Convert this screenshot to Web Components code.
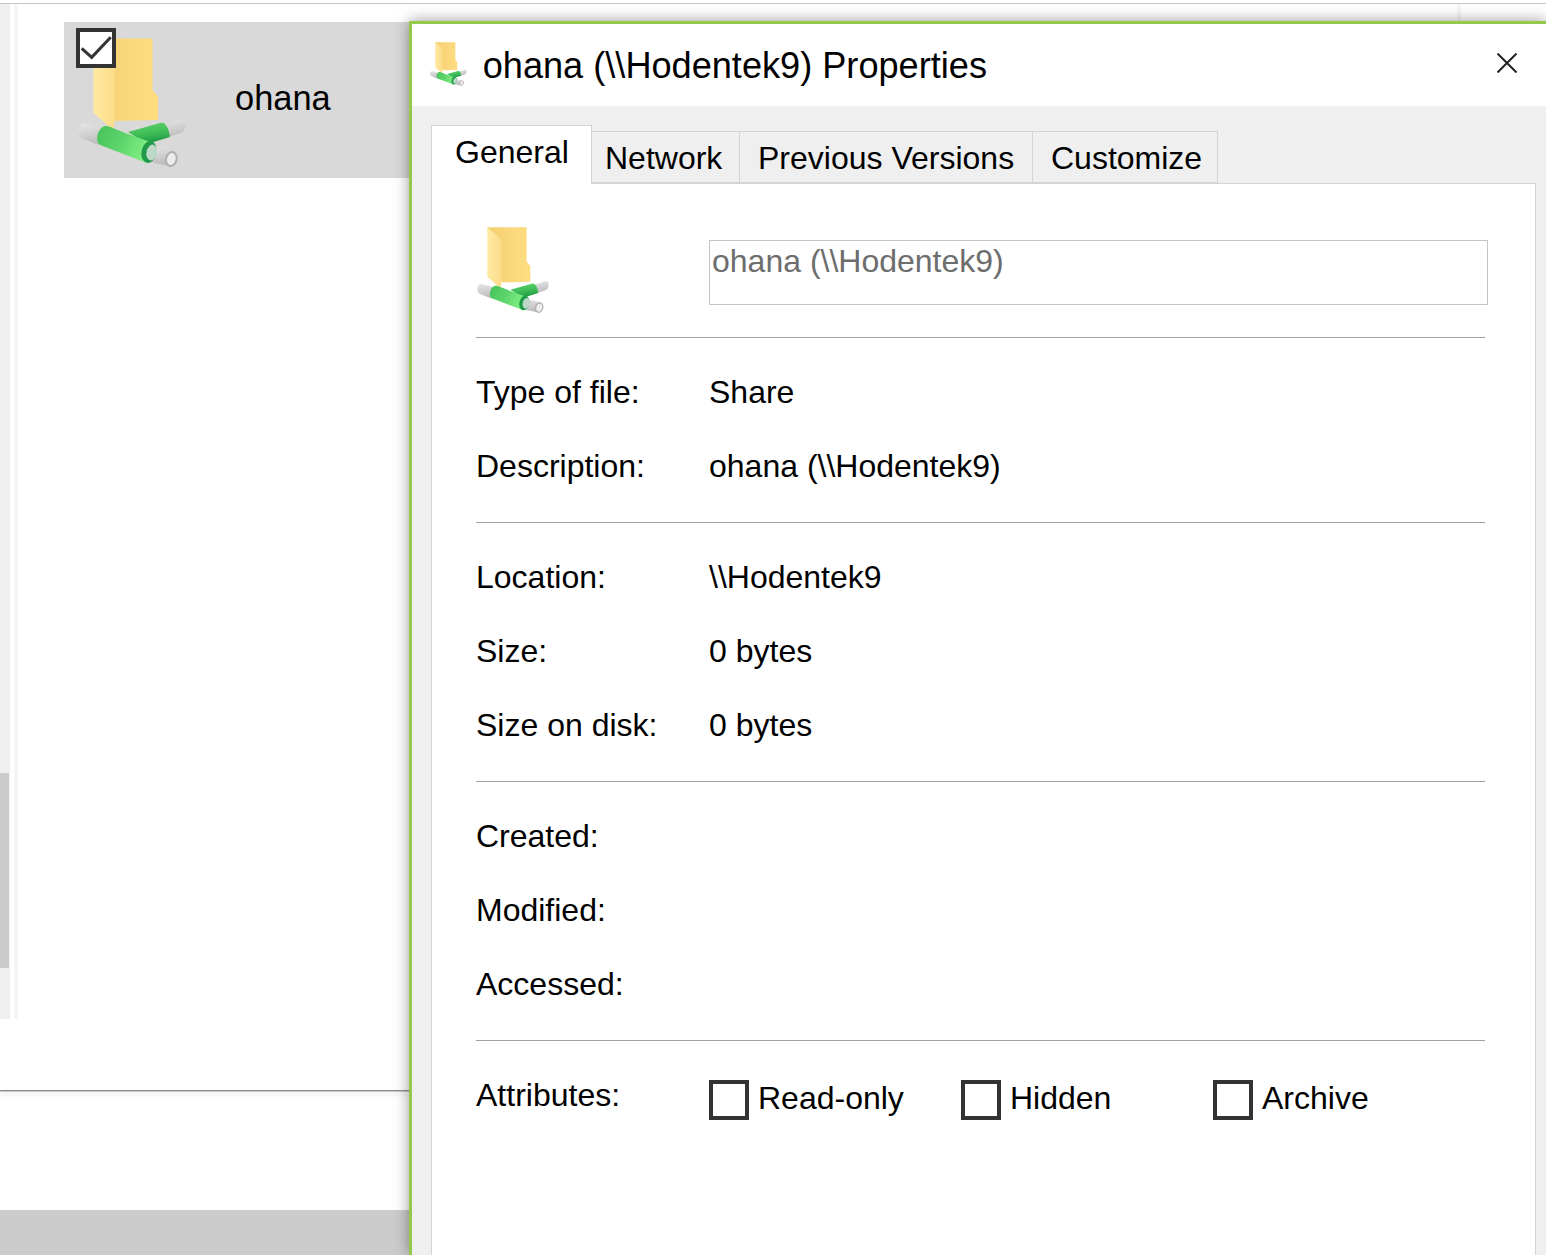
<!DOCTYPE html>
<html>
<head>
<meta charset="utf-8">
<title>ohana Properties</title>
<style>
  html, body { margin: 0; height: 100%; background: #fff; overflow: hidden; }
  body { font-family: "Liberation Sans", Arial, sans-serif; color: #000; }
</style>
</head>
<body>

<template id="share-icon-tpl">
  <style>
    :host { display: block; width: calc(108px * var(--k, 1)); height: calc(129px * var(--k, 1)); flex: none; }
    svg { display: block; width: 100%; height: 100%; overflow: visible; }
  </style>
  <svg viewBox="0 0 108 129">
    <defs>
      <linearGradient id="back" x1="0" x2="1" y1="0" y2="0">
        <stop offset="0" stop-color="#f3cf72"/><stop offset="1" stop-color="#fedd80"/>
      </linearGradient>
      <linearGradient id="flap" x1="0" x2="1" y1="0" y2="0">
        <stop offset="0" stop-color="#ffe9a3"/><stop offset="1" stop-color="#fbdc88"/>
      </linearGradient>
      <linearGradient id="main" x1="0" x2="1" y1="0" y2=".35">
        <stop offset="0" stop-color="#45c258"/><stop offset=".55" stop-color="#5dd56c"/><stop offset="1" stop-color="#7eec80"/>
      </linearGradient>
      <linearGradient id="branch" x1="0" x2=".25" y1="0" y2="1">
        <stop offset="0" stop-color="#62d66e"/><stop offset=".6" stop-color="#3fbc57"/><stop offset="1" stop-color="#1f9c45"/>
      </linearGradient>
      <linearGradient id="pipe" x1="0" x2=".25" y1="0" y2="1">
        <stop offset="0" stop-color="#e6e6e6"/><stop offset=".55" stop-color="#d2d2d2"/><stop offset="1" stop-color="#bdbdbd"/>
      </linearGradient>
    </defs>
    <!-- folder -->
    <path d="M15.5 .5H74.5V52L80 58.5V82L37 83Z" fill="url(#back)"/>
    <path d="M15.5 .5L37 18.5V82L35 92L15.5 75Z" fill="url(#flap)"/>
    <!-- grey pipe stubs -->
    <path d="M5.3 85.3L25.3 90.3L20.3 107L3.7 100.3C-1 98 -1 88 5.3 85.3Z" fill="url(#pipe)"/>
    <path d="M88 86L103.7 81C108 81 109.5 90 104 94.5L90 99Z" fill="url(#pipe)"/>
    <path d="M70 107L97 113.7L90.3 127.7L66 123Z" fill="url(#pipe)"/>
    <ellipse cx="93.3" cy="121" rx="5.3" ry="7" transform="rotate(15 93.3 121)" fill="#ececec" stroke="#b0b0b0" stroke-width="2"/>
    <!-- green tee -->
    <path d="M50 94L82 85C87 83 91 90 92 99L69 106Z" fill="url(#branch)"/>
    <path d="M27 88C31 88 33 89 36 90.5L50 96L71 103.5L69 125L22 107C17 104 19 90 27 88Z" fill="url(#main)"/>
    <ellipse cx="71" cy="114" rx="7.5" ry="11" transform="rotate(12 71 114)" fill="#1f9a48"/>
    <ellipse cx="73.7" cy="114.5" rx="5.2" ry="8" transform="rotate(12 73.7 114.5)" fill="#bcd9c8"/>
  </svg>
</template>

<template id="explorer-pane-tpl">
  <style>
    :host { display: flex; flex-direction: column; width: 409px; flex: none; height: 100%; }
    .main { display: flex; height: 1086px; flex: none; }
    .strip { width: 18px; height: 1015px; flex: none; display: flex; box-sizing: border-box; }
    .track { width: 10px; background: #efefef; padding-top: 769px; box-sizing: border-box; }
    .thumb { width: 9px; height: 195px; background: #ccc; }
    .edge { width: 4px; margin-left: 4px; background: #f5f5f5; }
    .rule { height: 1px; flex: none; background: #8f8f8f; box-shadow: 0 1px 0 #c4c4c4, 0 3px 5px rgba(0,0,0,.22); }
    .blank { height: 119px; flex: none; }
    .status { flex: 1; background: #ccc; }
    .content { flex: 1; padding-top: 18px; padding-left: 46px; }
  </style>
  <div class="main">
    <div class="strip"><div class="track"><div class="thumb"></div></div><div class="edge"></div></div>
    <div class="content"><slot></slot></div>
  </div>
  <div class="rule"></div>
  <div class="blank"></div>
  <div class="status"></div>
</template>

<template id="share-item-tpl">
  <style>
    :host { display: flex; position: relative; height: 156px; background: #d9d9d9; box-sizing: border-box; padding: 16px 0 0 14px; }
    .label { margin-left: 49px; font-size: 34.4px; line-height: 120px; }
    .tick { position: absolute; left: 12px; top: 6px; width: 40px; height: 40px; box-sizing: border-box; border: 4px solid #333; background: #fff; }
    .tick svg { display: block; width: 32px; height: 32px; }
  </style>
  <share-icon></share-icon>
  <span class="label"><slot></slot></span>
  <div class="tick"><svg viewBox="0 0 32 32"><path d="M1.7 16.3L11.7 25.3L30.7 5.3" fill="none" stroke="#333" stroke-width="3"/></svg></div>
</template>

<template id="prop-dialog-tpl">
  <style>
    :host { display: flex; flex-direction: column; flex: 1; min-width: 0; margin-top: 17px; box-sizing: border-box;
      border-left: 3px solid #94c94b; border-top: 3px solid #94c94b; background: #fff;
      box-shadow: 0 0 14px rgba(0,0,0,.4); z-index: 1; }
    .title { display: flex; align-items: center; height: 82px; flex: none; padding-left: 18px; padding-right: 29px; }
    share-icon { --k: .34; margin-bottom: 2px; }
    .text { flex: 1; margin-left: 16px; font-size: 36.15px; line-height: 82px; padding-top: 2px; white-space: nowrap; }
    .close { display: block; width: 20px; height: 20px; margin-bottom: 4px; }
    .body { flex: 1; min-height: 0; background: #efefef; padding: 19px 10px 0 19px; display: flex; flex-direction: column; }
  </style>
  <div class="title">
    <share-icon></share-icon>
    <span class="text"><slot name="title"></slot></span>
    <svg class="close" viewBox="0 0 20 20"><path d="M.5 .5L19.5 19.5M19.5 .5L.5 19.5" stroke="#222" stroke-width="2" fill="none"/></svg>
  </div>
  <div class="body"><slot></slot></div>
</template>

<template id="tab-strip-tpl">
  <style>
    :host { display: flex; align-items: flex-end; height: 58px; flex: none; position: relative; z-index: 1; }
  </style>
  <slot></slot>
</template>

<template id="tab-item-tpl">
  <style>
    :host { display: block; box-sizing: border-box; height: 52px; margin-bottom: 0; font-size: 32px; line-height: 52px;
      background: #efefef; border: 1px solid #d4d4d4; border-left: 0; white-space: nowrap; padding-left: var(--pad, 18px); width: var(--w); }
    :host([active]) { height: 59px; margin-bottom: -1px; line-height: 52px; background: #fff; border-left: 1px solid #d4d4d4; border-bottom: 0; }
  </style>
  <slot></slot>
</template>

<template id="prop-panel-tpl">
  <style>
    :host { display: block; flex: 1; background: #fff; border: 1px solid #d4d4d4; border-bottom: 0; box-sizing: border-box; padding: 0 50px 0 44px; }
  </style>
  <slot></slot>
</template>

<template id="name-row-tpl">
  <style>
    :host { display: flex; height: 154px; box-sizing: border-box; padding: 43px 0 0 1px; border-bottom: 1px solid #a0a0a0; }
    share-icon { --k: .6667; }
    .input { box-sizing: border-box; margin: 13px -3px 0 160px; flex: 1; height: 65px; border: 1px solid #c4c4c4;
      color: #6d6d6d; font-size: 32px; line-height: 40px; padding-left: 2px; white-space: nowrap; }
  </style>
  <share-icon></share-icon>
  <div class="input"><slot></slot></div>
</template>

<template id="prop-section-tpl">
  <style>
    :host { display: block; padding: 17px 0 19px; border-bottom: 1px solid #a0a0a0; }
  </style>
  <slot></slot>
</template>

<template id="prop-row-tpl">
  <style>
    :host { display: grid; grid-template-columns: 233px 1fr; height: 74px; font-size: 32px; line-height: 74px; white-space: nowrap; }
  </style>
  <span><slot name="label"></slot></span>
  <span><slot></slot></span>
</template>

<template id="attr-row-tpl">
  <style>
    :host { display: grid; grid-template-columns: 233px repeat(3, 252px); height: 74px; padding: 17px 0 0; font-size: 32px; line-height: 74px; white-space: nowrap; }
  </style>
  <span><slot name="label"></slot></span>
  <slot></slot>
</template>

<template id="attr-check-tpl">
  <style>
    :host { display: flex; align-items: center; height: 74px; font-size: 32px; padding-top: 5px; box-sizing: content-box; }
    .box { width: 40px; height: 40px; box-sizing: border-box; border: 4px solid #333; margin-right: 9px; flex: none; background: #fff; }
    .text { margin-bottom: 4px; }
  </style>
  <div class="box"></div>
  <span class="text"><slot></slot></span>
</template>

<template id="ohana-desktop-tpl">
  <style>
    :host { display: block; height: 1255px; width: 1546px; overflow: hidden; position: relative; }
    .top { height: 3px; }
    .line { height: 1px; background: #c4c4c4; }
    .row { display: flex; height: 1251px; }
    .tick { position: absolute; left: 1457px; top: 4px; width: 4px; height: 17px; background: rgba(0,0,0,.035); z-index: 2; }
  </style>
  <div class="top"></div>
  <div class="line"></div>
  <div class="row"><slot></slot></div>
  <div class="tick"></div>
</template>

<ohana-desktop>
  <explorer-pane>
    <share-item>ohana</share-item>
  </explorer-pane>
  <prop-dialog>
    <span slot="title">ohana (\\Hodentek9) Properties</span>
    <tab-strip>
      <tab-item active style="--w:161px;--pad:23px">General</tab-item>
      <tab-item style="--w:148px;--pad:13px">Network</tab-item>
      <tab-item style="--w:293px;--pad:18px">Previous Versions</tab-item>
      <tab-item style="--w:185px;--pad:18px">Customize</tab-item>
    </tab-strip>
    <prop-panel>
      <name-row>ohana (\\Hodentek9)</name-row>
      <prop-section>
        <prop-row><span slot="label">Type of file:</span>Share</prop-row>
        <prop-row><span slot="label">Description:</span>ohana (\\Hodentek9)</prop-row>
      </prop-section>
      <prop-section>
        <prop-row><span slot="label">Location:</span>\\Hodentek9</prop-row>
        <prop-row><span slot="label">Size:</span>0 bytes</prop-row>
        <prop-row><span slot="label">Size on disk:</span>0 bytes</prop-row>
      </prop-section>
      <prop-section>
        <prop-row><span slot="label">Created:</span></prop-row>
        <prop-row><span slot="label">Modified:</span></prop-row>
        <prop-row><span slot="label">Accessed:</span></prop-row>
      </prop-section>
      <attr-row>
        <span slot="label">Attributes:</span>
        <attr-check>Read-only</attr-check>
        <attr-check>Hidden</attr-check>
        <attr-check>Archive</attr-check>
      </attr-row>
    </prop-panel>
  </prop-dialog>
</ohana-desktop>

<script>
  // every element here is just its template cloned into an open shadow root
  const names = ["share-icon", "explorer-pane", "share-item", "prop-dialog", "tab-strip", "tab-item",
    "prop-panel", "name-row", "prop-section", "prop-row", "attr-row", "attr-check", "ohana-desktop"];

  names.forEach((name) => {
    customElements.define(name, class extends HTMLElement {
      constructor() {
        super();
        const tpl = document.getElementById(name + "-tpl");
        this.attachShadow({ mode: "open" }).appendChild(tpl.content.cloneNode(true));
      }
    });
  });
</script>
</body>
</html>
